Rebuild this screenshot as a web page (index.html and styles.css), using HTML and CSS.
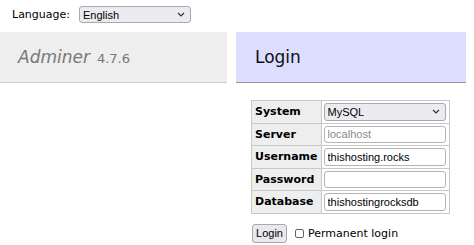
FILE: index.html
```html
<!DOCTYPE html>
<html lang="en">
<head>
    <meta charset="UTF-8">
    <title>Login - Adminer</title>
    <link rel="stylesheet" href="styles.css">
</head>
<body>
    <div class="lang">
        <label for="lang-select">Language:</label>
        <span class="select-wrap lang-wrap">
            <select id="lang-select" class="select">
                <option>English</option>
            </select>
            <svg class="chevron" width="8" height="5" viewBox="0 0 8 5"><path d="M1 1 L4 4 L7 1" fill="none" stroke="#333" stroke-width="1.2"/></svg>
        </span>
    </div>

    <div class="layout">
        <div class="menu">
            <h1><a href="#" class="brand">Adminer</a> <span class="version">4.7.6</span></h1>
        </div>

        <div class="content">
            <h2>Login</h2>
            <form>
                <table class="login-table">
                    <tr>
                        <th>System</th>
                        <td>
                            <span class="select-wrap">
                                <select class="select field">
                                    <option>MySQL</option>
                                </select>
                                <svg class="chevron" width="8" height="5" viewBox="0 0 8 5"><path d="M1 1 L4 4 L7 1" fill="none" stroke="#333" stroke-width="1.2"/></svg>
                            </span>
                        </td>
                    </tr>
                    <tr>
                        <th>Server</th>
                        <td><input class="field" type="text" placeholder="localhost"></td>
                    </tr>
                    <tr>
                        <th>Username</th>
                        <td><input class="field" type="text" value="thishosting.rocks"></td>
                    </tr>
                    <tr>
                        <th>Password</th>
                        <td><input class="field" type="password"></td>
                    </tr>
                    <tr>
                        <th>Database</th>
                        <td><input class="field" type="text" value="thishostingrocksdb"></td>
                    </tr>
                </table>
                <div class="actions">
                    <button type="button" class="btn">Login</button>
                    <label class="remember"><input type="checkbox" class="check"> Permanent login</label>
                </div>
            </form>
        </div>
    </div>
</body>
</html>
```

FILE: styles.css
```css
body {
    margin: 0;
    background: #fff;
    color: #000;
    font-family: "DejaVu Sans", Verdana, sans-serif;
    font-size: 11px;
    width: 474px;
}
.lang {
    height: 32px;
    box-sizing: border-box;
    padding: 6px 0 0 12px;
    display: flex;
    align-items: flex-start;
    gap: 9px;
}
.lang label {
    line-height: 17px;
}
.select-wrap {
    position: relative;
    display: inline-block;
}
.select {
    -webkit-appearance: none;
    appearance: none;
    box-sizing: border-box;
    height: 17px;
    padding: 0 3px;
    border: 1px solid #a8a8ae;
    border-radius: 3px;
    background: #ececf0;
    font-family: "Liberation Sans", Arial, sans-serif;
    font-size: 11px;
    color: #000;
    margin: 0;
}
.lang-wrap .select {
    width: 112px;
}
.chevron {
    position: absolute;
    right: 6px;
    top: 6px;
    pointer-events: none;
}
.layout {
    display: flex;
}
.menu {
    width: 227px;
}
h1 {
    margin: 0;
    height: 50px;
    display: flex;
    align-items: center;
    padding-left: 18px;
    background: #eee;
    border-bottom: 1px solid #ccc;
    font-size: 17px;
    font-weight: normal;
    color: #777;
}
.brand {
    color: #777;
    font-style: italic;
    text-decoration: none;
}
.version {
    font-size: 13px;
    margin-left: 7px;
    margin-top: 2px;
}
.content {
    margin-left: 9px;
    width: 230px;
}
h2 {
    margin: 0;
    height: 50px;
    display: flex;
    align-items: center;
    padding-left: 19px;
    background: #ddf;
    border-bottom: 1px solid #999;
    font-size: 17px;
    font-weight: normal;
    color: #111;
}
.login-table {
    margin: 17px 0 0 15px;
    border-collapse: collapse;
}
.login-table th,
.login-table td {
    border: 1px solid #c8c8c8;
    padding: 2px 3px;
}
.login-table th {
    background: #eee;
    text-align: left;
    font-weight: bold;
    width: 61px;
    padding-left: 3px;
    padding-right: 3px;
}
.login-table td {
    width: 122px;
    padding-left: 2px;
}
.field {
    box-sizing: border-box;
    width: 122px;
    height: 17.5px;
    display: block;
    margin: 0;
    padding: 0 3px;
    border: 1px solid #b4b4b4;
    border-radius: 3px;
    font-family: "Liberation Sans", Arial, sans-serif;
    font-size: 11px;
    color: #000;
    background: #fff;
}
.field::placeholder {
    color: #8a8a8a;
}
select.field {
    background: #ececf0;
    border-color: #a8a8ae;
}
.actions {
    display: flex;
    align-items: center;
    margin: 10px 0 0 16px;
}
.btn {
    box-sizing: border-box;
    height: 19px;
    width: 35px;
    padding: 0;
    border: 1px solid #a8a8ae;
    border-radius: 3px;
    background: #e9e9ed;
    font-family: "Liberation Sans", Arial, sans-serif;
    font-size: 11px;
    color: #000;
}
.remember {
    display: flex;
    align-items: center;
    margin-left: 8px;
    gap: 4px;
}
.check {
    -webkit-appearance: none;
    appearance: none;
    width: 9px;
    height: 9px;
    margin: 0;
    border: 1px solid #666;
    border-radius: 2px;
    background: #fff;
}
```
